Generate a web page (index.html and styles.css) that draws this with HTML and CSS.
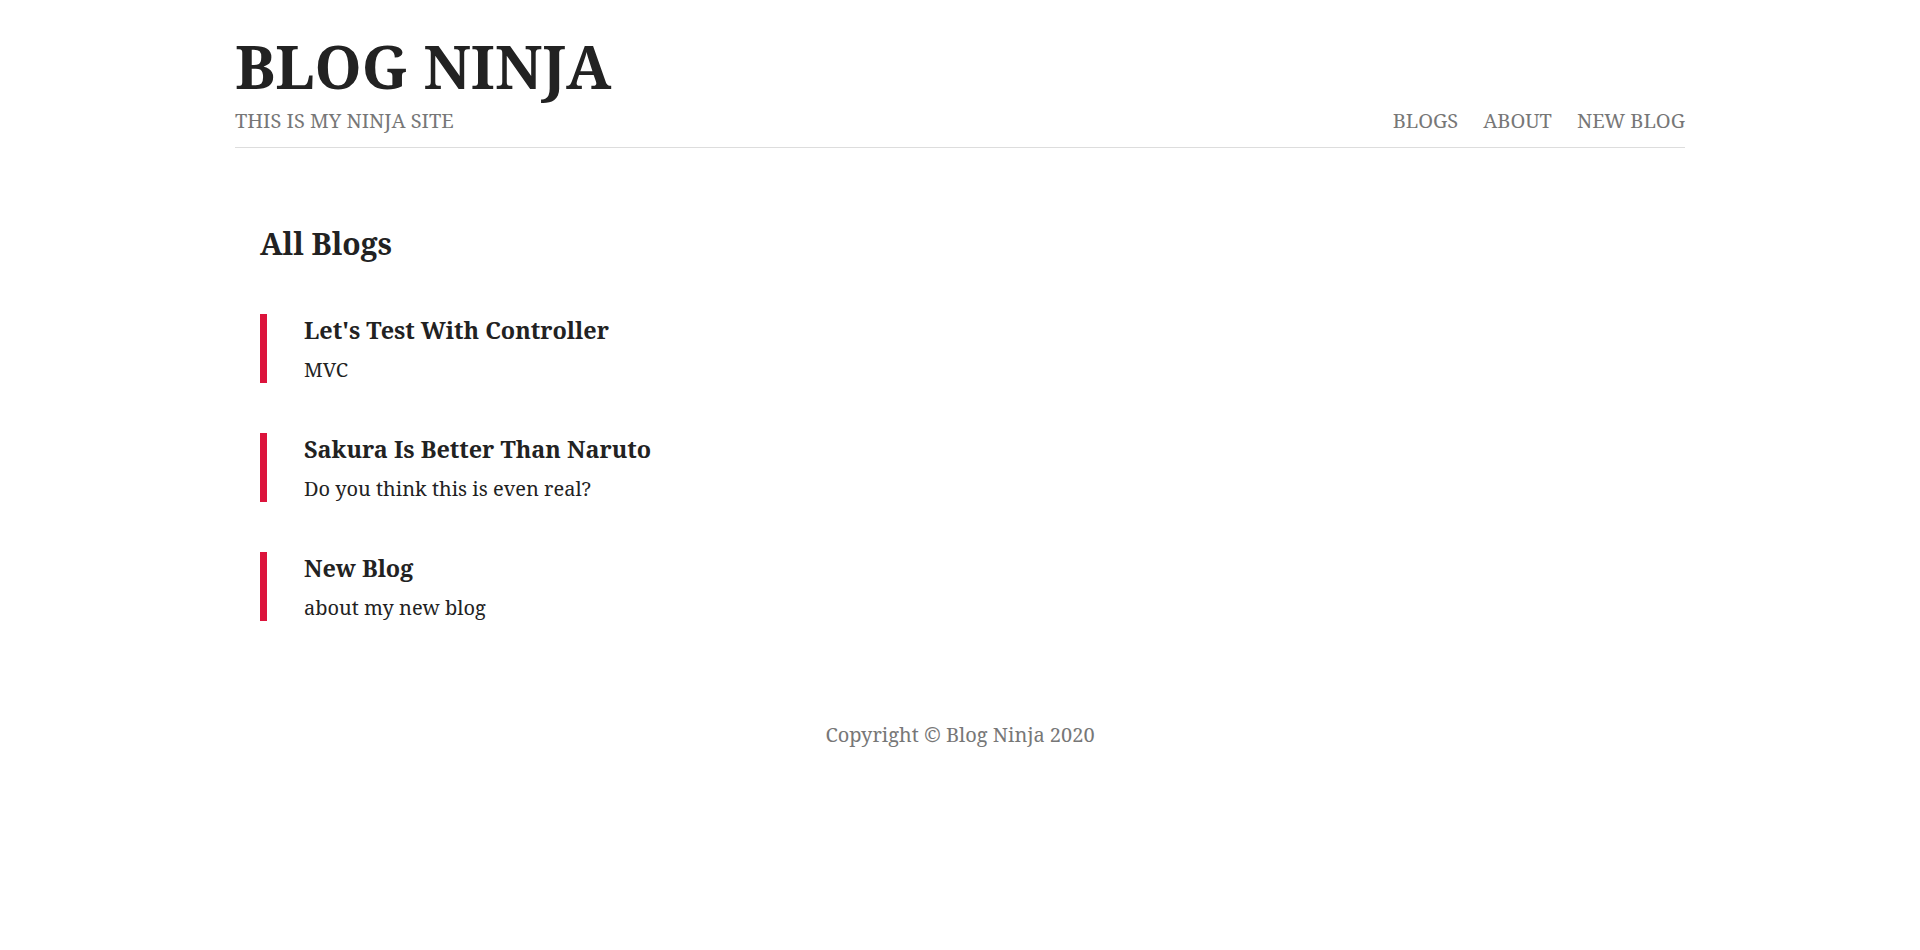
FILE: index.html
```html
<!DOCTYPE html>
<html lang="en">
<head>
<meta charset="utf-8">
<title>Blog Ninja | Home</title>
<link rel="stylesheet" href="styles.css">
</head>
<body>
  <nav class="nav">
    <div class="site-title">
      <h1 class="brand">BLOG NINJA</h1>
      <p class="tagline">This is my ninja site</p>
    </div>
    <ul class="menu">
      <li class="menu-item"><a class="menu-link" href="#">Blogs</a></li>
      <li class="menu-item"><a class="menu-link" href="#">About</a></li>
      <li class="menu-item"><a class="menu-link" href="#">New Blog</a></li>
    </ul>
  </nav>
  <div class="blogs">
    <h2 class="page-heading">All Blogs</h2>
    <a class="blog" href="#">
      <h3 class="blog-title">Let's Test With Controller</h3>
      <p class="blog-snippet">MVC</p>
    </a>
    <a class="blog" href="#">
      <h3 class="blog-title">Sakura Is Better Than Naruto</h3>
      <p class="blog-snippet">Do you think this is even real?</p>
    </a>
    <a class="blog" href="#">
      <h3 class="blog-title">New Blog</h3>
      <p class="blog-snippet">about my new blog</p>
    </a>
  </div>
  <footer class="footer">Copyright &copy; Blog Ninja 2020</footer>
</body>
</html>
```

FILE: styles.css
```css
html, body {
  background: #fff;
}
body {
  box-sizing: border-box;
  max-width: 1500px;
  margin: 25px auto;
  padding: 0 25px;
  font-family: "Noto Serif", "DejaVu Serif", serif;
  font-size: 20px;
  color: #222;
}
h1, h2, h3, p, a, ul {
  margin: 0;
  padding: 0;
  text-decoration: none;
  color: #222;
}
.nav {
  display: flex;
  justify-content: space-between;
  margin-bottom: 75px;
  padding-bottom: 13px;
  border-bottom: 1px solid #ddd;
  text-transform: uppercase;
}
.brand {
  font-size: 60px;
  font-weight: 700;
}
.tagline {
  color: #777;
}
.menu {
  display: flex;
  align-items: flex-end;
  list-style: none;
}
.menu-item {
  margin-left: 25px;
}
.menu-link {
  color: #777;
}
.page-heading {
  font-size: 30px;
  padding-left: 25px;
  margin: 37px 0;
}
.blog {
  display: block;
  margin: 50px 25px;
  padding-left: 37px;
  border-left: 7px solid crimson;
}
.blog-title {
  font-size: 23.4px;
  margin-bottom: 10px;
}
.footer {
  color: #777;
  text-align: center;
  margin: 100px auto 25px;
}
```
